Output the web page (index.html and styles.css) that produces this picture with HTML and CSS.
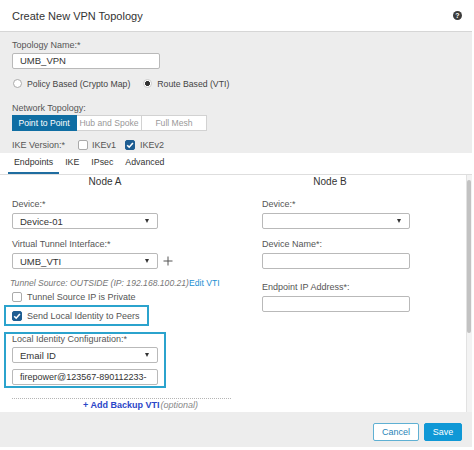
FILE: index.html
```html
<!DOCTYPE html>
<html>
<head>
<meta charset="utf-8">
<link rel="stylesheet" href="styles.css">
</head>
<body>
<div class="dialog">
  <div class="header">
    <span class="title">Create New VPN Topology</span>
    <span class="help">?</span>
  </div>

  <div class="top">
    <div class="label">Topology Name:*</div>
    <div class="input name-input">UMB_VPN</div>
    <div class="radios">
      <span class="radio"></span><span class="rtext">Policy Based (Crypto Map)</span>
      <span class="radio on"></span><span class="rtext">Route Based (VTI)</span>
    </div>
    <div class="label net">Network Topology:</div>
    <div class="seg">
      <span class="active">Point to Point</span><span>Hub and Spoke</span><span>Full Mesh</span>
    </div>
    <div class="ike">
      <span class="ike-label">IKE Version:*</span>
      <span class="cb"></span><span class="ike-v1">IKEv1</span>
      <span class="cb on ike-cb2"><svg viewBox="0 0 10 10" width="10" height="10"><path d="M2.2 5.2 L4.2 7.2 L7.9 3" fill="none" stroke="#fff" stroke-width="1.6"/></svg></span><span class="ike-v2">IKEv2</span>
    </div>
  </div>

  <div class="tabs">
    <span class="tab active">Endpoints</span>
    <span class="tab">IKE</span>
    <span class="tab">IPsec</span>
    <span class="tab">Advanced</span>
  </div>

  <div class="content">
    <div class="col col-a">
      <div class="node">Node A</div>
      <div class="label fl">Device:*</div>
      <div class="select"><span>Device-01</span><span class="arrow"></span></div>
      <div class="label fl">Virtual Tunnel Interface:*</div>
      <div class="vti-row">
        <div class="select nomt"><span>UMB_VTI</span><span class="arrow"></span></div>
        <svg class="plus" viewBox="0 0 10 10" width="10" height="10"><path d="M5 0.5 V9.5 M0.5 5 H9.5" stroke="#555" stroke-width="1" fill="none"/></svg>
      </div>
      <div class="tsrc">Tunnel Source: OUTSIDE (IP: 192.168.100.21)<span class="edit">Edit VTI</span></div>
      <div class="check-row">
        <span class="cb"></span><span class="ctext">Tunnel Source IP is Private</span>
      </div>
      <div class="box1">
        <span class="cb on"><svg viewBox="0 0 10 10" width="10" height="10"><path d="M2.2 5.2 L4.2 7.2 L7.9 3" fill="none" stroke="#fff" stroke-width="1.6"/></svg></span>
        <span class="ctext">Send Local Identity to Peers</span>
      </div>
      <div class="box2">
        <div class="label box-label">Local Identity Configuration:*</div>
        <div class="select"><span>Email ID</span><span class="arrow"></span></div>
        <div class="input email">firepower@123567-890112233-</div>
      </div>
      <div class="dots"></div>
      <div class="add"><span class="add-link">+ Add Backup VTI</span><span class="opt">(optional)</span></div>
    </div>

    <div class="col col-b">
      <div class="node">Node B</div>
      <div class="label fl">Device:*</div>
      <div class="select wide"><span></span><span class="arrow"></span></div>
      <div class="label fl">Device Name*:</div>
      <div class="input wide b-input"></div>
      <div class="label fl ep">Endpoint IP Address*:</div>
      <div class="input wide b-input"></div>
    </div>

    <div class="scroll"><div class="thumb"></div></div>
  </div>

  <div class="footer">
    <span class="btn cancel">Cancel</span>
    <span class="btn save">Save</span>
  </div>
</div>
</body>
</html>
```

FILE: styles.css
```css
body {
  margin: 0;
  background: #fff;
  font-family: "Liberation Sans", Arial, sans-serif;
  color: #333;
}

.dialog {
  width: 472px;
}

.header {
  height: 31px;
  border-bottom: 1px solid #d6d6d6;
  display: flex;
  align-items: center;
  justify-content: space-between;
  padding: 0 10px 0 12px;
}

.title {
  font-size: 11px;
  color: #333;
}

.help {
  width: 9px;
  height: 9px;
  border-radius: 50%;
  background: #3c3c3c;
  color: #fff;
  font-size: 7px;
  font-weight: bold;
  line-height: 9px;
  text-align: center;
}

.top {
  background: #ededed;
  padding: 8px 12px 3px;
}

.label {
  font-size: 9px;
  line-height: 11px;
  color: #555;
  white-space: nowrap;
}

.input {
  height: 16px;
  box-sizing: border-box;
  border: 1px solid #b9b9b9;
  border-radius: 2px;
  background: #fff;
  font-size: 9.5px;
  line-height: 14px;
  padding-left: 7px;
  color: #333;
}

.name-input {
  width: 148px;
  margin-top: 2px;
}

.radios {
  margin-top: 9px;
  height: 11px;
  display: flex;
  align-items: center;
  font-size: 8.7px;
  color: #444;
}

.radio {
  width: 9px;
  height: 9px;
  box-sizing: border-box;
  border: 1px solid #aaa;
  border-radius: 50%;
  background: #fff;
  margin-left: 1px;
}

.radio.on {
  border-color: #ccc;
  background: radial-gradient(circle, #333 0, #333 2.2px, #fff 2.8px);
}

.rtext {
  margin-left: 5px;
  margin-right: 12px;
}

.net {
  margin-top: 14px;
}

.seg {
  margin-top: 1px;
  display: flex;
  height: 16px;
}

.seg span {
  width: 65px;
  box-sizing: border-box;
  border: 1px solid #d2d2d2;
  border-left: none;
  background: #fff;
  text-align: center;
  font-size: 8.6px;
  line-height: 14px;
  color: #999;
  white-space: nowrap;
}

.seg .active {
  background: #0f6ea3;
  border-color: #0f6ea3;
  color: #fff;
}

.ike {
  margin-top: 8px;
  height: 11px;
  display: flex;
  align-items: center;
  font-size: 9px;
  color: #555;
}

.ike-label {
  width: 66px;
}

.ike-v1 {
  margin-left: 4px;
}

.ike-cb2 {
  margin-left: 9px;
}

.ike-v2 {
  margin-left: 5px;
}

.cb {
  width: 10px;
  height: 10px;
  box-sizing: border-box;
  border: 1px solid #aaa;
  border-radius: 2px;
  background: #fff;
  display: flex;
  flex-shrink: 0;
}

.cb.on {
  background: #1e5d92;
  border-color: #1e5d92;
}

.cb svg {
  margin: -1px;
}

.tabs {
  height: 21px;
  border-bottom: 1px solid #dedede;
  display: flex;
  padding-left: 8px;
}

.tab {
  padding: 0 6px;
  font-size: 8.8px;
  line-height: 19px;
  border-bottom: 2px solid transparent;
  color: #333;
}

.tab.active {
  border-bottom-color: #1f6da0;
}

.content {
  display: flex;
  height: 237px;
}

.col {
  box-sizing: border-box;
  width: 233px;
}

.col-a {
  padding-left: 12px;
}

.col-b {
  padding-left: 29px;
}

.node {
  font-size: 10px;
  line-height: 14px;
  text-align: center;
  color: #333;
}

.col-a .node {
  width: 186px;
}

.col-b .node {
  width: 136px;
}

.fl {
  margin-top: 10px;
}

.select {
  margin-top: 3px;
  width: 146px;
  height: 16px;
  box-sizing: border-box;
  border: 1px solid #b9b9b9;
  border-radius: 2px;
  background: #fff;
  display: flex;
  align-items: center;
  justify-content: space-between;
  padding: 0 8px 0 7px;
  font-size: 9.5px;
  color: #333;
}

.select.nomt {
  margin-top: 0;
}

.arrow {
  width: 0;
  height: 0;
  border-left: 2.5px solid transparent;
  border-right: 2.5px solid transparent;
  border-top: 4px solid #333;
}

.wide {
  width: 148px;
}

.b-input {
  margin-top: 3px;
}

.ep {
  margin-top: 13px;
}

.vti-row {
  margin-top: 3px;
  display: flex;
  align-items: center;
}

.plus {
  margin-left: 5px;
}

.tsrc {
  margin-top: 9px;
  margin-left: -2px;
  font-size: 8.6px;
  line-height: 11px;
  font-style: italic;
  color: #777;
  white-space: nowrap;
}

.edit {
  font-style: normal;
  color: #1b8fd2;
}

.check-row {
  margin-top: 2px;
  height: 11px;
  display: flex;
  align-items: center;
}

.ctext {
  margin-left: 5px;
  font-size: 9px;
  color: #555;
  white-space: nowrap;
}

.box1 {
  margin-top: 3px;
  margin-left: -8px;
  width: 145px;
  height: 21px;
  box-sizing: border-box;
  border: 2px solid #2ba3cd;
  padding-left: 6px;
  display: flex;
  align-items: center;
}

.box2 {
  margin-top: 6px;
  margin-left: -8px;
  width: 162px;
  box-sizing: border-box;
  border: 2px solid #2ba3cd;
  padding: 0 6px 1px;
}

.box-label {
  line-height: 10px;
}

.email {
  margin-top: 6px;
  width: 146px;
  font-size: 9px;
}

.dots {
  margin-top: 10px;
  width: 219px;
  border-top: 1px dotted #b5b5b5;
}

.add {
  margin-top: 1px;
  padding-left: 71px;
  font-size: 9px;
  line-height: 11px;
  white-space: nowrap;
}

.add-link {
  color: #2b46c8;
  font-weight: bold;
}

.opt {
  color: #888;
  font-style: italic;
  margin-left: 1px;
}

.scroll {
  width: 6px;
  box-sizing: border-box;
  background: #f3f3f3;
  border-left: 1px solid #e2e2e2;
  padding-top: 5px;
}

.thumb {
  width: 4px;
  height: 153px;
  background: #c2c2c2;
  border-radius: 2px;
}

.footer {
  height: 35px;
  box-sizing: border-box;
  background: #ededed;
  display: flex;
  justify-content: flex-end;
  align-items: flex-start;
  gap: 5px;
  padding: 11px 10px 0 0;
}

.btn {
  height: 18px;
  box-sizing: border-box;
  border-radius: 2px;
  font-size: 9px;
  line-height: 16px;
  text-align: center;
}

.cancel {
  width: 46px;
  border: 1px solid #5fb0d3;
  background: #fff;
  color: #2a84b8;
}

.save {
  width: 38px;
  border: 1px solid #0f98d6;
  background: #0f98d6;
  color: #fff;
}
```
